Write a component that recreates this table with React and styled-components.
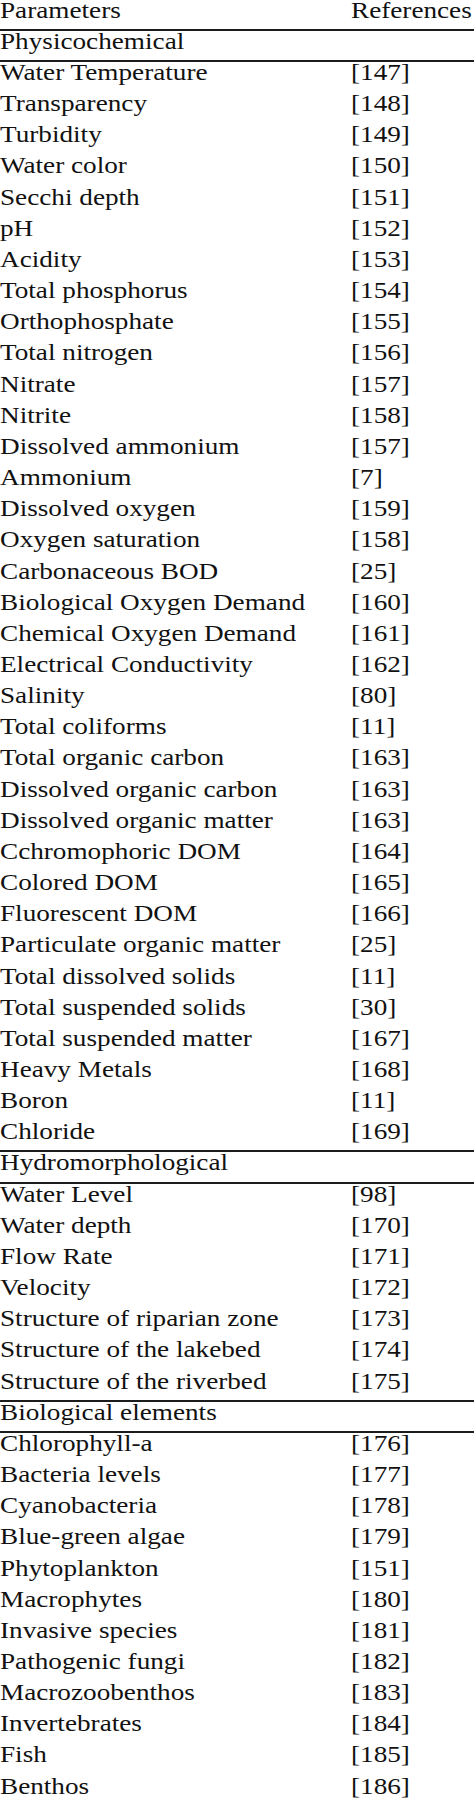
import React from 'react';
import styled, { createGlobalStyle } from 'styled-components';

const GlobalStyle = createGlobalStyle`
  html, body { margin: 0; padding: 0; background: #fff; }
  body { width: 474px; overflow: hidden; }
`;

const PITCH = 31.16;

const Table = styled.div`
  display: flex;
  flex-direction: column;
  width: 474px;
  font-family: "Liberation Serif", "Times New Roman", serif;
  font-size: 24px;
  color: #111;
`;

const Row = styled.div`
  display: grid;
  grid-template-columns: 351px 1fr;
  height: ${PITCH}px;
  line-height: ${PITCH}px;
  white-space: nowrap;
  background: ${(p) =>
    p.$ruled ? 'linear-gradient(#1c1c1c, #1c1c1c) 0 3px / 100% 2px no-repeat' : 'none'};
`;

const HeaderRow = styled(Row)`
  height: 25.86px;
  line-height: 20.7px;
`;

const Cell = styled.div`
  transform: scaleX(1.133);
  transform-origin: 0 50%;
`;

const sections = [
  {
    title: 'Physicochemical',
    rows: [
      ['Water Temperature', '147'],
      ['Transparency', '148'],
      ['Turbidity', '149'],
      ['Water color', '150'],
      ['Secchi depth', '151'],
      ['pH', '152'],
      ['Acidity', '153'],
      ['Total phosphorus', '154'],
      ['Orthophosphate', '155'],
      ['Total nitrogen', '156'],
      ['Nitrate', '157'],
      ['Nitrite', '158'],
      ['Dissolved ammonium', '157'],
      ['Ammonium', '7'],
      ['Dissolved oxygen', '159'],
      ['Oxygen saturation', '158'],
      ['Carbonaceous BOD', '25'],
      ['Biological Oxygen Demand', '160'],
      ['Chemical Oxygen Demand', '161'],
      ['Electrical Conductivity', '162'],
      ['Salinity', '80'],
      ['Total coliforms', '11'],
      ['Total organic carbon', '163'],
      ['Dissolved organic carbon', '163'],
      ['Dissolved organic matter', '163'],
      ['Cchromophoric DOM', '164'],
      ['Colored DOM', '165'],
      ['Fluorescent DOM', '166'],
      ['Particulate organic matter', '25'],
      ['Total dissolved solids', '11'],
      ['Total suspended solids', '30'],
      ['Total suspended matter', '167'],
      ['Heavy Metals', '168'],
      ['Boron', '11'],
      ['Chloride', '169'],
    ],
  },
  {
    title: 'Hydromorphological',
    rows: [
      ['Water Level', '98'],
      ['Water depth', '170'],
      ['Flow Rate', '171'],
      ['Velocity', '172'],
      ['Structure of riparian zone', '173'],
      ['Structure of the lakebed', '174'],
      ['Structure of the riverbed', '175'],
    ],
  },
  {
    title: 'Biological elements',
    rows: [
      ['Chlorophyll-a', '176'],
      ['Bacteria levels', '177'],
      ['Cyanobacteria', '178'],
      ['Blue-green algae', '179'],
      ['Phytoplankton', '151'],
      ['Macrophytes', '180'],
      ['Invasive species', '181'],
      ['Pathogenic fungi', '182'],
      ['Macrozoobenthos', '183'],
      ['Invertebrates', '184'],
      ['Fish', '185'],
      ['Benthos', '186'],
    ],
  },
];

export default function App() {
  return (
    <>
      <GlobalStyle />
      <Table>
        <HeaderRow>
          <Cell>Parameters</Cell>
          <Cell>References</Cell>
        </HeaderRow>
        {sections.map((s) => (
          <React.Fragment key={s.title}>
            <Row $ruled>
              <Cell>{s.title}</Cell>
              <Cell />
            </Row>
            {s.rows.map(([name, ref], i) => (
              <Row key={name + i} $ruled={i === 0}>
                <Cell>{name}</Cell>
                <Cell>[{ref}]</Cell>
              </Row>
            ))}
          </React.Fragment>
        ))}
      </Table>
    </>
  );
}
